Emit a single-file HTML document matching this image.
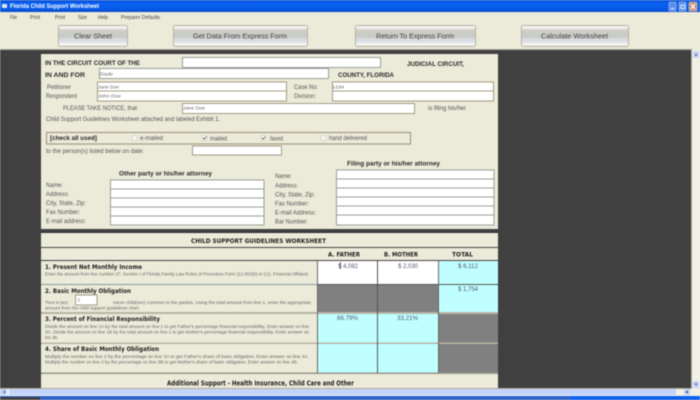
<!DOCTYPE html>
<html><head><meta charset="utf-8"><title>Florida Child Support Worksheet</title>
<style>
html,body{margin:0;padding:0;width:700px;height:400px;overflow:hidden;background:#ecead9}
svg{display:block;position:absolute;left:0;top:0;filter:blur(.45px)}
text{font-family:"Liberation Sans",sans-serif;font-size:6px;fill:#555}
.b{font-weight:bold;fill:#2a2a2a;font-size:6.5px}
.h{font-family:"DejaVu Sans",sans-serif;font-weight:bold;fill:#222;font-size:6.5px}
.s{font-size:4.6px;fill:#666}
.m{font-size:5.5px;fill:#444}
.l{font-size:6.5px;fill:#555}
.v{font-size:6px;fill:#557}
.t{font-size:7.5px;fill:#444}
.in{fill:#fff;stroke:#a49c84;stroke-width:1}
.in2{fill:#fff;stroke:#98a098;stroke-width:1}
.btn{fill:url(#bg);stroke:#b8b4a4;stroke-width:1}
</style></head><body>
<svg width="700" height="400" viewBox="0 0 700 400" xmlns="http://www.w3.org/2000/svg">
<defs>
<linearGradient id="tb" x1="0" y1="0" x2="0" y2="1"><stop offset="0" stop-color="#0a4ed8"/><stop offset=".3" stop-color="#0a62f4"/><stop offset=".8" stop-color="#0658e4"/><stop offset="1" stop-color="#0a48c8"/></linearGradient>
<linearGradient id="bg" x1="0" y1="0" x2="0" y2="1"><stop offset="0" stop-color="#fafafa"/><stop offset=".14" stop-color="#ecece8"/><stop offset=".22" stop-color="#cfd0c8"/><stop offset=".55" stop-color="#c8cac4"/><stop offset=".62" stop-color="#d6dae0"/><stop offset=".8" stop-color="#dfe3e8"/><stop offset=".88" stop-color="#f8f8f8"/><stop offset="1" stop-color="#e8e8e0"/></linearGradient>
</defs>

<!-- title bar -->
<rect x="0" y="0" width="700" height="12" fill="url(#tb)"/>
<rect x="2" y="4" width="5" height="4" fill="#dfe6f2"/>
<text x="10" y="8" textLength="89" lengthAdjust="spacingAndGlyphs" style="fill:#fff;font-weight:bold;font-size:6px">Florida Child Support Worksheet</text>
<rect x="669" y="2" width="7" height="9" rx="1" fill="#5c8fe8" stroke="#b8ccf0" stroke-width=".6"/>
<rect x="671" y="8" width="3" height="1" fill="#fff"/>
<rect x="679" y="2" width="7" height="9" rx="1" fill="#5c8fe8" stroke="#b8ccf0" stroke-width=".6"/>
<rect x="681" y="5" width="3.5" height="3.5" fill="none" stroke="#fff" stroke-width=".8"/>
<rect x="689" y="2" width="8" height="9" rx="1" fill="#c89078" stroke="#e4d0c4" stroke-width=".6"/>
<path d="M691 4l4 5M695 4l-4 5" stroke="#fff" stroke-width="1.2"/>

<!-- menu -->
<text class="m" x="10" y="19" textLength="7" lengthAdjust="spacingAndGlyphs">File</text>
<text class="m" x="30" y="19" textLength="10" lengthAdjust="spacingAndGlyphs">Print</text>
<text class="m" x="55" y="19" textLength="10" lengthAdjust="spacingAndGlyphs">Print</text>
<text class="m" x="78" y="19" textLength="9" lengthAdjust="spacingAndGlyphs">Size</text>
<text class="m" x="98" y="19" textLength="10" lengthAdjust="spacingAndGlyphs">Help</text>
<text class="m" x="121" y="19" textLength="39" lengthAdjust="spacingAndGlyphs">Preparer Defaults</text>

<!-- buttons -->
<rect class="btn" x="58.5" y="25.5" width="69" height="21" rx="2"/>
<rect class="btn" x="173.5" y="25.5" width="134" height="21" rx="2"/>
<rect class="btn" x="355.5" y="25.5" width="120" height="21" rx="2"/>
<rect class="btn" x="521.5" y="25.5" width="107" height="21" rx="2"/>
<text class="t" x="74" y="38.5" textLength="38" lengthAdjust="spacingAndGlyphs">Clear Sheet</text>
<text class="t" x="193" y="38.5" textLength="94" lengthAdjust="spacingAndGlyphs">Get Data From Express Form</text>
<text class="t" x="376" y="38.5" textLength="78" lengthAdjust="spacingAndGlyphs">Return To Express Form</text>
<text class="t" x="541" y="38.5" textLength="67" lengthAdjust="spacingAndGlyphs">Calculate Worksheet</text>

<!-- dark work area -->
<rect x="0" y="49" width="692" height="1" fill="#a8a89c"/>
<rect x="0" y="50" width="691" height="338" fill="#404040"/>
<rect x="0" y="388" width="692" height="1" fill="#b0a898"/>
<rect x="691" y="50" width="1" height="339" fill="#b0a898"/>

<!-- vertical scrollbar -->
<rect x="692" y="50" width="8" height="339" fill="#f2f1e8"/>
<rect x="693" y="51" width="6" height="7" rx="1" fill="#c3d3fb"/>
<path d="M694.5 55.5l1.5-2 1.5 2z" fill="#556"/>
<rect x="693" y="381" width="6" height="7" rx="1" fill="#c3d3fb"/>
<path d="M694.5 383.5l1.5 2 1.5-2z" fill="#556"/>

<!-- horizontal scrollbar -->
<rect x="0" y="389" width="676" height="6" fill="#c3d3fb"/>
<rect x="0" y="395" width="700" height="1" fill="#f4f6fc"/>
<rect x="676" y="389" width="24" height="7" fill="#f2f1e8"/>
<rect x="684" y="389" width="6" height="6" fill="#c3d3fb"/>
<rect x="686" y="391" width="2" height="2" fill="#556"/>
<path d="M5 390l-2 2 2 2z" fill="#667"/>
<rect x="7" y="389" width="2" height="6" fill="#eef2fc"/>

<!-- taskbar -->
<rect x="0" y="396" width="700" height="4" fill="#2f62c8"/>
<rect x="570" y="396" width="130" height="4" fill="#0e60ee"/>
<rect x="0" y="397" width="40" height="3" fill="#404040"/>

<!-- panel 1 -->
<rect x="41" y="54" width="457" height="175" fill="#ecead9"/>
<text class="b" x="45" y="65" textLength="95" lengthAdjust="spacingAndGlyphs">IN THE CIRCUIT COURT OF THE</text>
<text class="b" x="45" y="77" textLength="40" lengthAdjust="spacingAndGlyphs">IN AND FOR</text>
<text class="b" x="407" y="66" textLength="57" lengthAdjust="spacingAndGlyphs">JUDICIAL CIRCUIT,</text>
<text class="b" x="338" y="77" textLength="56" lengthAdjust="spacingAndGlyphs">COUNTY, FLORIDA</text>

<rect class="in2" x="182.5" y="57.5" width="198" height="10"/>
<rect class="in2" x="99.5" y="68.5" width="229" height="10"/>
<rect class="in" x="97.5" y="82" width="189" height="9"/>
<rect class="in" x="97.5" y="91" width="189" height="10"/>
<rect class="in" x="332.5" y="82" width="161" height="9"/>
<rect class="in" x="332.5" y="91" width="161" height="10"/>
<rect class="in" x="182.5" y="103.5" width="232" height="10"/>

<text class="s" x="100" y="75.5" textLength="13" lengthAdjust="spacingAndGlyphs">Dade</text>
<text class="l" x="47" y="89" textLength="24" lengthAdjust="spacingAndGlyphs">Petitioner</text>
<text class="l" x="46" y="98" textLength="31" lengthAdjust="spacingAndGlyphs">Respondent</text>
<text class="s" x="98" y="88.5" textLength="21" lengthAdjust="spacingAndGlyphs">Jane Doe</text>
<text class="s" x="98" y="97.5" textLength="23" lengthAdjust="spacingAndGlyphs">John Doe</text>
<text class="l" x="294" y="89" textLength="24" lengthAdjust="spacingAndGlyphs">Case No:</text>
<text class="l" x="294" y="98" textLength="22" lengthAdjust="spacingAndGlyphs">Division:</text>
<text class="s" x="332" y="88.5" textLength="12" lengthAdjust="spacingAndGlyphs">1234</text>
<text class="l" x="63" y="110" textLength="74" lengthAdjust="spacingAndGlyphs">PLEASE TAKE NOTICE, that</text>
<text class="s" x="183" y="109.5" textLength="22" lengthAdjust="spacingAndGlyphs">Jane Doe</text>
<text class="l" x="428" y="110" textLength="38" lengthAdjust="spacingAndGlyphs">is filing his/her</text>
<text class="l" x="46" y="121" textLength="174" lengthAdjust="spacingAndGlyphs">Child Support Guidelines Worksheet attached and labeled Exhibit 1.</text>

<!-- check row -->
<rect x="46.5" y="132.5" width="364" height="11.5" fill="none" stroke="#a49c84" stroke-width="1.2"/>
<text class="b" x="50" y="140" textLength="47" lengthAdjust="spacingAndGlyphs">[check all used]</text>
<rect x="132" y="135.5" width="5" height="5" fill="#f6f6f0" stroke="#c4c4b8" stroke-width=".5"/>
<text class="l" x="140" y="140" textLength="23" lengthAdjust="spacingAndGlyphs">e-mailed</text>
<rect x="202" y="135.5" width="5" height="5" fill="#f6f6f0" stroke="#c4c4b8" stroke-width=".5"/>
<path d="M203 138l1.2 1.2 2-2.4" fill="none" stroke="#444" stroke-width=".8"/>
<text class="l" x="210" y="140.5" textLength="17" lengthAdjust="spacingAndGlyphs">mailed</text>
<rect x="261" y="135.5" width="5" height="5" fill="#f6f6f0" stroke="#c4c4b8" stroke-width=".5"/>
<path d="M262 138l1.2 1.2 2-2.4" fill="none" stroke="#444" stroke-width=".8"/>
<text class="l" x="270" y="140.5" textLength="13" lengthAdjust="spacingAndGlyphs">faxed</text>
<rect x="321" y="135.5" width="5" height="5" fill="#f6f6f0" stroke="#c4c4b8" stroke-width=".5"/>
<text class="l" x="329" y="140" textLength="38" lengthAdjust="spacingAndGlyphs">hand delivered</text>

<text class="l" x="46" y="153" textLength="98" lengthAdjust="spacingAndGlyphs">to the person(s) listed below on date:</text>
<rect class="in" x="192.5" y="146" width="89" height="9"/>

<!-- other party -->
<text class="b" x="119" y="175.5" textLength="93" lengthAdjust="spacingAndGlyphs">Other party or his/her attorney</text>
<rect class="in2" x="110.5" y="180" width="153.5" height="9"/>
<rect class="in2" x="110.5" y="189" width="153.5" height="9"/>
<rect class="in2" x="110.5" y="198" width="153.5" height="9"/>
<rect class="in2" x="110.5" y="207" width="153.5" height="9"/>
<rect class="in2" x="110.5" y="216" width="153.5" height="9"/>
<text class="l" x="46" y="187" textLength="17" lengthAdjust="spacingAndGlyphs">Name:</text>
<text class="l" x="46" y="196" textLength="23" lengthAdjust="spacingAndGlyphs">Address:</text>
<text class="l" x="46" y="205" textLength="40" lengthAdjust="spacingAndGlyphs">City, State, Zip:</text>
<text class="l" x="46" y="214" textLength="34" lengthAdjust="spacingAndGlyphs">Fax Number:</text>
<text class="l" x="46" y="223" textLength="40" lengthAdjust="spacingAndGlyphs">E-mail address:</text>

<!-- filing party -->
<text class="b" x="347" y="165.5" textLength="93" lengthAdjust="spacingAndGlyphs">Filing party or his/her attorney</text>
<rect class="in2" x="336.5" y="170" width="157.5" height="9"/>
<rect class="in2" x="336.5" y="179" width="157.5" height="9"/>
<rect class="in2" x="336.5" y="188" width="157.5" height="9"/>
<rect class="in2" x="336.5" y="197" width="157.5" height="9"/>
<rect class="in2" x="336.5" y="206" width="157.5" height="9"/>
<rect class="in2" x="336.5" y="215" width="157.5" height="10"/>
<text class="l" x="275" y="178" textLength="17" lengthAdjust="spacingAndGlyphs">Name:</text>
<text class="l" x="275" y="187.5" textLength="23" lengthAdjust="spacingAndGlyphs">Address:</text>
<text class="l" x="275" y="196.5" textLength="40" lengthAdjust="spacingAndGlyphs">City, State, Zip:</text>
<text class="l" x="275" y="205.5" textLength="34" lengthAdjust="spacingAndGlyphs">Fax Number:</text>
<text class="l" x="275" y="214.5" textLength="41" lengthAdjust="spacingAndGlyphs">E-mail Address:</text>
<text class="l" x="275" y="223.5" textLength="33" lengthAdjust="spacingAndGlyphs">Bar Number:</text>

<!-- panel 2 -->
<rect x="41" y="233" width="457" height="155" fill="#ecead9"/>
<rect x="41" y="232" width="457" height="1" fill="#2c3038"/>
<text class="h" x="191" y="243" textLength="135" lengthAdjust="spacingAndGlyphs">CHILD SUPPORT GUIDELINES WORKSHEET</text>
<rect x="41" y="247" width="457" height="1" fill="#444"/>
<text class="h" x="328" y="256.5" textLength="32" lengthAdjust="spacingAndGlyphs">A. FATHER</text>
<text class="h" x="384" y="256.5" textLength="34" lengthAdjust="spacingAndGlyphs">B. MOTHER</text>
<text class="h" x="452" y="256.5" textLength="21" lengthAdjust="spacingAndGlyphs">TOTAL</text>
<rect x="41" y="260" width="457" height="1" fill="#444"/>

<!-- cells -->
<rect x="317" y="261" width="121" height="23" fill="#fff"/>
<rect x="438" y="261" width="60" height="23" fill="#c0ffff"/>
<rect x="317" y="284" width="121" height="28" fill="#808080"/>
<rect x="438" y="284" width="60" height="28" fill="#c0ffff"/>
<rect x="317" y="314" width="121" height="29" fill="#c0ffff"/>
<rect x="438" y="314" width="60" height="29" fill="#808080"/>
<rect x="317" y="344" width="121" height="29" fill="#c0ffff"/>
<rect x="438" y="344" width="60" height="29" fill="#808080"/>

<!-- row lines -->
<rect x="41" y="284" width="276" height="1" fill="#8a9aa4"/>
<rect x="317" y="284" width="181" height="1" fill="#555"/>
<rect x="41" y="312" width="457" height="2" fill="#b8b4a4"/>
<rect x="41" y="342.5" width="457" height="1.5" fill="#b8b4a4"/>
<rect x="41" y="372.5" width="457" height="1.5" fill="#98988c"/>
<rect x="317" y="261" width="1" height="112" fill="#666"/>
<rect x="377" y="261" width="1" height="112" fill="#555"/>
<rect x="438" y="261" width="1" height="112" fill="#666"/>

<!-- values -->
<text class="v" x="338" y="268" textLength="20" lengthAdjust="spacingAndGlyphs">$ 4,082</text>
<rect x="340" y="262" width=".8" height="7" fill="#555"/>
<text class="v" x="398" y="268" textLength="20" lengthAdjust="spacingAndGlyphs">$ 2,030</text>
<text class="v" x="458" y="268" textLength="20" lengthAdjust="spacingAndGlyphs">$ 6,112</text>
<text class="v" x="458" y="291" textLength="20" lengthAdjust="spacingAndGlyphs">$ 1,754</text>
<text class="v" x="337" y="320" textLength="21" lengthAdjust="spacingAndGlyphs">66.79%</text>
<text class="v" x="397" y="320" textLength="21" lengthAdjust="spacingAndGlyphs">33.21%</text>

<!-- row 1 -->
<text class="h" x="45" y="269" textLength="97" lengthAdjust="spacingAndGlyphs">1. Present Net Monthly Income</text>
<text class="s" x="45" y="275.5" textLength="264" lengthAdjust="spacingAndGlyphs">Enter the amount from line number 27, Section I of Florida Family Law Rules of Procedure Form (12.902(b) or (c)), Financial Affidavit.</text>

<!-- row 2 -->
<text class="h" x="45" y="293" textLength="86" lengthAdjust="spacingAndGlyphs">2. Basic Monthly Obligation</text>
<text class="s" x="45" y="304" textLength="23" lengthAdjust="spacingAndGlyphs">There is (are)</text>
<rect class="in" x="75.5" y="295" width="21.5" height="10"/>
<text class="s" x="77.5" y="301.5">2</text>
<text class="s" x="113" y="304" textLength="198" lengthAdjust="spacingAndGlyphs">minor child(ren) common to the parties. Using the total amount from line 1, enter the appropriate</text>
<text class="s" x="45" y="309.5" textLength="95" lengthAdjust="spacingAndGlyphs">amount from the child support guidelines chart.</text>

<!-- row 3 -->
<text class="h" x="45" y="321" textLength="115" lengthAdjust="spacingAndGlyphs">3. Percent of Financial Responsibility</text>
<text class="s" x="45" y="328" textLength="264" lengthAdjust="spacingAndGlyphs">Divide the amount on line 1A by the total amount on line 1 to get Father's percentage financial responsibility. Enter answer on line</text>
<text class="s" x="45" y="333.5" textLength="264" lengthAdjust="spacingAndGlyphs">3A. Divide the amount on line 1B by the total amount on line 1 to get Mother's percentage financial responsibility. Enter answer on</text>
<text class="s" x="45" y="339" textLength="13" lengthAdjust="spacingAndGlyphs">line 3B.</text>

<!-- row 4 -->
<text class="h" x="45" y="351" textLength="114" lengthAdjust="spacingAndGlyphs">4. Share of Basic Monthly Obligation</text>
<text class="s" x="45" y="358" textLength="264" lengthAdjust="spacingAndGlyphs">Multiply the number on line 2 by the percentage on line 3A to get Father's share of base obligation. Enter answer on line 4A.</text>
<text class="s" x="45" y="363.5" textLength="253" lengthAdjust="spacingAndGlyphs">Multiply the number on line 2 by the percentage on line 3B to get Mother's share of basic obligation. Enter answer on line 4B.</text>

<!-- footer -->
<text class="h" x="167" y="385.5" textLength="187" lengthAdjust="spacingAndGlyphs" style="font-size:7px">Additional Support - Health Insurance, Child Care and Other</text>
</svg>
</body></html>
